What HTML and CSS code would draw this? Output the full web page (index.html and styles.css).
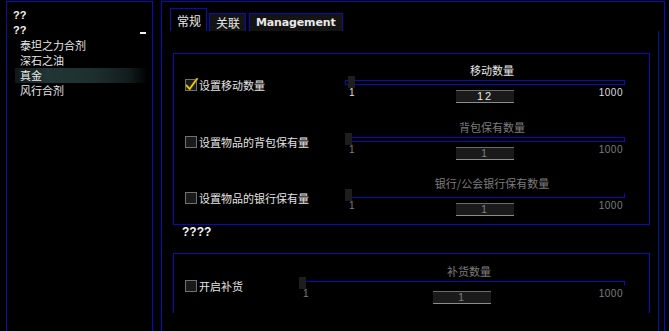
FILE: index.html
```html
<!DOCTYPE html>
<html lang="zh">
<head>
<meta charset="utf-8">
<title>补货设置</title>
<link rel="stylesheet" href="styles.css">
</head>
<body>
<div class="app">
  <aside class="sidebar">
    <div class="tree-head">??</div>
    <div class="tree-head">??<span class="collapse"></span></div>
    <ul class="tree-list">
      <li class="tree-item">泰坦之力合剂</li>
      <li class="tree-item">深石之油</li>
      <li class="tree-item tree-item--active">真金</li>
      <li class="tree-item">风行合剂</li>
    </ul>
  </aside>
  <main class="main">
    <nav class="tabs">
      <div class="tab tab--active">常规</div>
      <div class="tab">关联</div>
      <div class="tab tab--latin">Management</div>
    </nav>
    <section class="pane">
      <div class="scroll">
        <div class="group">
          <div class="row">
            <div class="check">
              <span class="box">
                <svg class="tick" viewBox="0 0 14 14" width="14" height="14">
                  <path d="M1.5 7.5 L4.6 11 L12 0.8" fill="none" stroke="#7a5f00" stroke-width="2.6" stroke-linecap="round" stroke-linejoin="round"/>
                  <path d="M1.5 7.5 L4.6 11 L12 0.8" fill="none" stroke="#f2d21a" stroke-width="1.3" stroke-linecap="round" stroke-linejoin="round"/>
                </svg>
              </span>
              <span class="check-label">设置移动数量</span>
            </div>
            <div class="slider">
              <div class="slider-title">移动数量</div>
              <div class="track"><span class="thumb" style="left:2px"></span></div>
              <div class="slider-foot"><span class="min">1</span><span class="value">12</span><span class="max">1000</span></div>
            </div>
          </div>
          <div class="row row--disabled">
            <div class="check">
              <span class="box"></span>
              <span class="check-label">设置物品的背包保有量</span>
            </div>
            <div class="slider">
              <div class="slider-title">背包保有数量</div>
              <div class="track"><span class="thumb" style="left:-1px"></span></div>
              <div class="slider-foot"><span class="min">1</span><span class="value">1</span><span class="max">1000</span></div>
            </div>
          </div>
          <div class="row row--disabled">
            <div class="check">
              <span class="box"></span>
              <span class="check-label">设置物品的银行保有量</span>
            </div>
            <div class="slider">
              <div class="slider-title">银行/公会银行保有数量</div>
              <div class="track track--bottom"><span class="thumb" style="left:-1px"></span></div>
              <div class="slider-foot"><span class="min">1</span><span class="value">1</span><span class="max">1000</span></div>
            </div>
          </div>
        </div>
        <h3 class="section-title">????</h3>
        <div class="group group--clipped">
          <div class="row row--disabled">
            <div class="check">
              <span class="box"></span>
              <span class="check-label">开启补货</span>
            </div>
            <div class="slider slider--wide">
              <div class="slider-title">补货数量</div>
              <div class="track track--top"><span class="thumb" style="left:-1px"></span></div>
              <div class="slider-foot"><span class="min">1</span><span class="value">1</span><span class="max">1000</span></div>
            </div>
          </div>
        </div>
      </div>
    </section>
  </main>
</div>
</body>
</html>
```
FILE: styles.css
```css
:root {
  --blue: #0c0cb0;
}

* {
  box-sizing: border-box;
}

body {
  margin: 0;
  background: #000;
  overflow: hidden;
  font-family: "Noto Sans CJK SC", "Noto Sans", sans-serif;
  color: #e6e6e6;
}

.app {
  display: flex;
  align-items: flex-start;
  height: 331px;
}

/* ---------- sidebar ---------- */
.sidebar {
  margin: 1px 0 0 6px;
  width: 147px;
  height: 340px;
  border: 1px solid var(--blue);
  border-bottom: none;
  padding: 6px 0 0 6px;
}

.tree-head {
  display: flex;
  justify-content: space-between;
  align-items: center;
  height: 15px;
  font: bold 11px/15px "Liberation Sans", sans-serif;
  color: #f2f2f2;
}

.collapse {
  width: 6px;
  height: 2px;
  margin: 4px 6px 0 0;
  background: #f0f0f0;
}

.tree-list {
  list-style: none;
  margin: 0;
  padding: 0;
}

.tree-item {
  height: 15px;
  padding-left: 7px;
  font-size: 11px;
  line-height: 15px;
  color: #e6e6e6;
}

.tree-item--active {
  margin: 0 4px 0 2px;
  padding-left: 5px;
  background: linear-gradient(90deg, rgba(30, 48, 48, 0.5) 0%, #223636 25%, #1d2e2e 60%, #131d1d 85%, rgba(0, 0, 0, 0) 100%);
}

/* ---------- main ---------- */
.main {
  margin: 1px 0 0 8px;
  width: 504px;
  height: 340px;
  border: 1px solid var(--blue);
  border-bottom: none;
  padding-top: 6px;
}

.tabs {
  display: flex;
  align-items: flex-end;
  gap: 2px;
  height: 23px;
  padding-left: 8px;
}

.tab {
  height: 18px;
  padding: 0 5px 0 6px;
  border: 1px solid var(--blue);
  border-bottom: none;
  background: #141414;
  font-size: 12px;
  line-height: 17px;
  color: #e8e8e8;
}

.tab--active {
  height: 23px;
  padding-bottom: 3px;
  padding-top: 5px;
  background: #000;
  line-height: 14px;
}

.tab--latin {
  width: 94px;
  padding: 0 0 0 6px;
  font: bold 11px/17px "DejaVu Sans", sans-serif;
  letter-spacing: -0.15px;
  margin-left: 1px;
}

.pane {
  margin-right: 5px;
  height: 300px;
  border-right: 1px solid var(--blue);
}

.scroll {
  height: 282px;
  overflow: hidden;
  padding-top: 22px;
}

.group {
  margin: 0 8px 0 11px;
  border: 1px solid var(--blue);
  padding: 10px 0 8px 11px;
  display: flex;
  flex-direction: column;
  gap: 17.5px;
}

.group--clipped {
  margin-top: 14px;
  height: 120px;
  padding-top: 11px;
}

.section-title {
  margin: 0 0 0 20px;
  font: bold 12px/14px "Liberation Sans", sans-serif;
  color: #f4f4f4;
}

/* ---------- rows ---------- */
.row {
  display: flex;
  align-items: flex-start;
  height: 39px;
}

.check {
  display: flex;
  align-items: center;
  gap: 2px;
  margin-top: 15px;
  height: 12px;
}

.box {
  position: relative;
  width: 12px;
  height: 12px;
  border: 1px solid #707070;
  background: #1a1a1a;
}

.tick {
  position: absolute;
  left: -1px;
  top: -2px;
}

.check-label {
  font-size: 11px;
  line-height: 12px;
  color: #e4e4e4;
}

/* ---------- slider ---------- */
.slider {
  width: 280px;
  margin: 0 24px 0 auto;
}

.slider--wide {
  width: 326px;
}

.slider-title {
  height: 12px;
  padding-left: 14px;
  text-align: center;
  font-size: 11px;
  line-height: 12px;
  color: #e8e8e8;
}

.track {
  position: relative;
  height: 5px;
  margin-top: 4px;
  border: 1px solid var(--blue);
}

.track--bottom {
  border-top-color: transparent;
  border-left-color: transparent;
}

.track--top {
  border-bottom-color: transparent;
  border-left-color: transparent;
}

.thumb {
  position: absolute;
  top: -5px;
  width: 7px;
  height: 12px;
  background: #1e1e1e;
}

.slider-foot {
  display: grid;
  grid-template-columns: 1fr 58px 1fr;
  margin-top: 5px;
  font-family: "Liberation Sans", sans-serif;
}

.min,
.max {
  margin-top: -2px;
  font-size: 10px;
  line-height: 10px;
  letter-spacing: 0.5px;
  color: #dcdcdc;
}

.min {
  padding-left: 4px;
}

.max {
  justify-self: end;
  padding-right: 2px;
}

.value {
  height: 13px;
  border-top: 1px solid #6a6a6a;
  border-bottom: 1px solid #8c8c8c;
  background: #1a1a1a;
  text-align: center;
  font-size: 11px;
  line-height: 11px;
  letter-spacing: 2px;
  color: #e8e8e8;
}

.row--disabled .slider-title,
.row--disabled .min,
.row--disabled .max,
.row--disabled .value {
  color: #7c7c7c;
}
```
